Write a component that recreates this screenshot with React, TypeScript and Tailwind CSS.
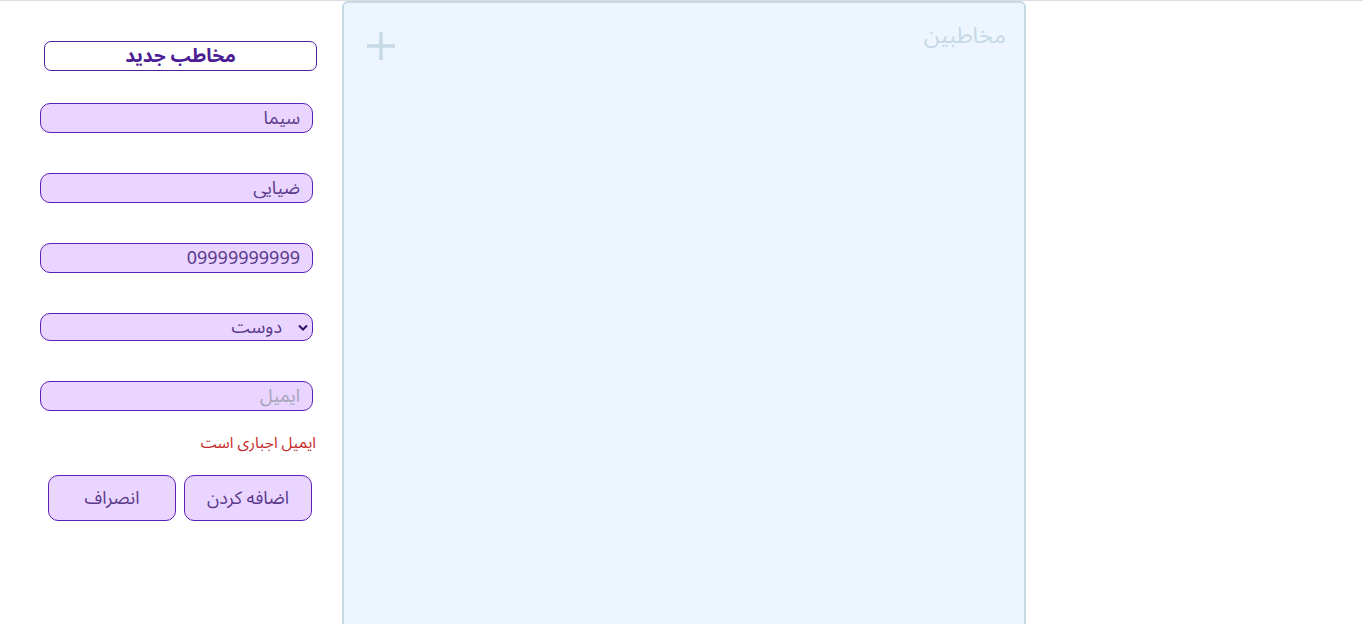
import { useState } from "react"

const font = { fontFamily: '"Noto Sans Arabic", "DejaVu Sans", "Noto Sans", sans-serif' }

const field =
  "h-[30px] w-[273px] rounded-[10px] border border-[#5b21b6] bg-[#e9d5ff] px-[12px] text-[18px] text-[#5b3a8c] outline-none"

export default function App() {
  const [type, setType] = useState("friend")

  return (
    <div className="flex h-[624px] overflow-hidden border-t border-[#dcdcdc] bg-white" style={font}>
      {/* FORM COLUMN */}
      <div className="w-[342px] shrink-0">
        <div className="ml-[40px] flex w-[273px] flex-col" dir="rtl">
          <div className="mr-[-4px] mt-[40px] flex h-[30px] w-[273px] items-center justify-center rounded-[7px] border border-[#4c1d95] text-[19px] font-bold text-[#4c1d95]">
            مخاطب جدید
          </div>

          <input className={`mt-[32px] ${field}`} defaultValue="سیما" />
          <input className={`mt-[40px] ${field}`} defaultValue="ضیایی" />
          <input className={`mt-[40px] ${field}`} defaultValue="09999999999" />

          <div className="relative mt-[40px] h-[28px] w-[273px]">
            <select
              className="h-[28px] w-[273px] appearance-none rounded-[10px] border border-[#5b21b6] bg-[#e9d5ff] pl-[8px] pr-[30px] py-0 text-[18px] leading-[26px] text-[#5b3a8c] outline-none"
              value={type}
              onChange={(e) => setType(e.target.value)}
            >
              <option value="friend">دوست</option>
              <option value="family">خانواده</option>
              <option value="work">همکار</option>
            </select>
            <svg
              width="10"
              height="7"
              viewBox="0 0 10 7"
              className="pointer-events-none absolute right-[5px] top-[11px]"
            >
              <path d="M1 1.5L5 5.5L9 1.5" fill="none" stroke="#2e1065" strokeWidth="2" />
            </svg>
          </div>

          <input className={`mt-[40px] ${field} placeholder:text-[#a3a3b5]`} placeholder="ایمیل" />

          <p className="mr-[-3px] mt-[20px] h-[24px] text-[15.5px] leading-[24px] text-[#c62828]">ایمیل اجباری است</p>

          <div className="mr-[1px] mt-[20px] flex gap-[8px]">
            <button className="h-[46px] w-[128px] rounded-[10px] border border-[#5b21b6] bg-[#e9d5ff] text-[18px] text-[#5b3a8c]">
              اضافه کردن
            </button>
            <button className="h-[46px] w-[128px] rounded-[10px] border border-[#5b21b6] bg-[#e9d5ff] text-[18px] text-[#5b3a8c]">
              انصراف
            </button>
          </div>
        </div>
      </div>

      {/* CONTACTS PANEL */}
      <div className="h-[640px] w-[684px] shrink-0 rounded-[6px] border-2 border-[#c6d9e4] bg-[#edf5ff]">
        <div className="flex items-start justify-between pl-[20px] pr-[18px] pt-[16px]">
          <svg width="34" height="34" viewBox="0 0 34 34" className="mt-[10px]">
            <path d="M17 3V31M3 17H31" stroke="#c6d9e4" strokeWidth="3.5" />
          </svg>
          <h2 className="text-[23px] text-[#c6d9e4]" dir="rtl">مخاطبین</h2>
        </div>
      </div>
    </div>
  )
}
